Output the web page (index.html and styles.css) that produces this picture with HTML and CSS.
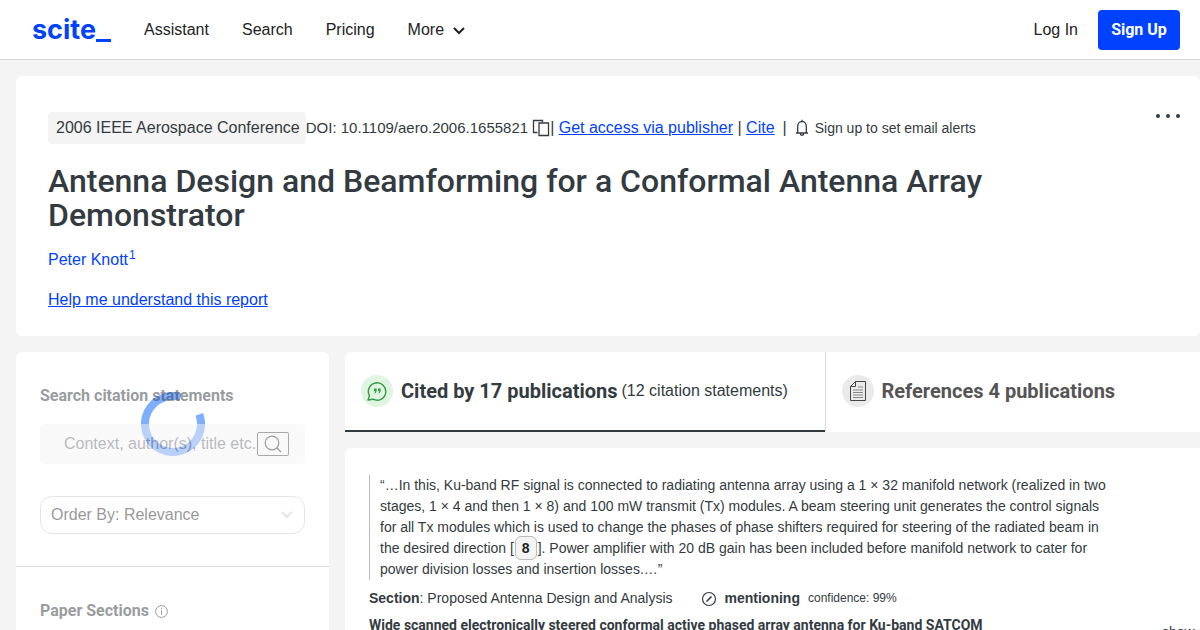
FILE: index.html
```html
<!DOCTYPE html>
<html lang="en">
<head>
  <meta charset="UTF-8">
  <meta name="viewport" content="width=device-width,initial-scale=1">
  <title>Antenna Design and Beamforming for a Conformal Antenna Array Demonstrator - scite</title>
  <link rel="stylesheet" href="styles.css">
</head>
<body>
  <header class="navbar">
    <a class="logo" href="#">scite<span class="logo-bar"></span></a>
    <nav class="nav-links">
      <a href="#">Assistant</a>
      <a href="#">Search</a>
      <a href="#">Pricing</a>
      <button class="more" type="button">More
        <svg width="14" height="14" viewBox="0 0 14 14"><path d="M2 5l5 5 5-5" fill="none" stroke="currentColor" stroke-width="2"/></svg>
      </button>
    </nav>
    <a class="login" href="#">Log In</a>
    <button class="signup" type="button">Sign Up</button>
  </header>

  <main>
    <section class="card paper">
      <div class="meta">
        <span class="journal">2006 IEEE Aerospace Conference</span>
        <span class="doi">DOI: 10.1109/aero.2006.1655821</span>
        <button class="copy" type="button" aria-label="Copy DOI">
          <svg width="18" height="18" viewBox="0 0 18 18" fill="none" stroke="currentColor"><path d="M5.500 13.500h-4v-12h9v2" stroke-width="1.300"/><path d="M7 4h9.500v12.500H7z" stroke-width="1.300"/></svg>
        </button>
        <span class="links">| <a href="#">Get access via publisher</a> | <a href="#">Cite</a></span>
        <span class="bar">|</span>
        <button class="alerts" type="button">
          <svg width="14" height="18" viewBox="0 0 14 18" fill="none" stroke="currentColor" stroke-width="1.300"><path d="M1 14h12M2.700 14V7.500C2.700 4.600 4.500 2.500 7 2.500s4.300 2.100 4.300 5V14M7 2.500V.8M5.300 14.500c0 2.300 3.400 2.300 3.400 0"/></svg>
          Sign up to set email alerts
        </button>
        <button class="dots" type="button" aria-label="More options">
          <svg width="24" height="4" viewBox="0 0 24 4" fill="currentColor"><circle cx="2" cy="2" r="2"/><circle cx="12" cy="2" r="2"/><circle cx="22" cy="2" r="2"/></svg>
        </button>
      </div>
      <h1>Antenna Design and Beamforming for a Conformal Antenna Array Demonstrator</h1>
      <div class="authors"><a href="#">Peter Knott<sup>1</sup></a></div>
      <a class="help" href="#">Help me understand this report</a>
    </section>

    <div class="columns">
      <aside class="card sidebar">
        <svg class="spinner" width="64" height="64" viewBox="0 0 64 64"><circle cx="32" cy="32" r="28" fill="none" stroke="#7fafff" stroke-width="8" stroke-dasharray="149 27" transform="rotate(-20 32 32)"/></svg>
        <form class="filters">
          <div class="filter-group">
            <label for="search">Search citation statements</label>
            <div class="search-box">
              <input id="search" type="text" placeholder="Context, author(s), title etc.">
              <button type="button" aria-label="Search">
                <svg width="18" height="18" viewBox="0 0 18 18" fill="none" stroke="currentColor" stroke-width="1.200"><circle cx="8" cy="8" r="6.800"/><path d="M13 13l4 4"/></svg>
              </button>
            </div>
            <div class="select-box">
              <select aria-label="Order by">
                <option>Order By: Relevance</option>
              </select>
              <svg width="12" height="8" viewBox="0 0 12 8"><path d="M1 1l5 5 5-5" fill="none" stroke="#ccc" stroke-width="2"/></svg>
            </div>
          </div>
          <div class="filter-group">
            <h2>Paper Sections
              <svg width="13" height="13" viewBox="0 0 13 13" fill="none" stroke="currentColor"><circle cx="6.500" cy="6.500" r="5.900"/><path d="M6.500 5.500v4M6.500 3.200v1.200"/></svg>
            </h2>
          </div>
        </form>
      </aside>

      <div class="report">
        <div class="tabs">
          <a class="tab active" href="#">
            <span class="tab-icon green">
              <svg width="20" height="20" viewBox="0 0 20 20" fill="none" stroke="currentColor" stroke-width="1.400"><path d="M1 19l1.500-4.200A8.700 8.700 0 1 1 6 18.200z" stroke-linejoin="round"/><g fill="currentColor" stroke="none"><path d="M7 7.500h2.600v2.300c0 1.500-.8 2.500-2.200 2.800v-.9c.6-.2.900-.7.900-1.400H7zM11 7.500h2.600v2.300c0 1.500-.8 2.500-2.200 2.800v-.9c.6-.2.900-.7.900-1.400H11z"/></g></svg>
            </span>
            <span class="tab-title">Cited by 17 publications</span>
            <span class="tab-note">(12 citation statements)</span>
          </a>
          <a class="tab" href="#">
            <span class="tab-icon gray">
              <svg width="16" height="20" viewBox="0 0 16 20" fill="none" stroke="currentColor"><path d="M5.500.5h10v19H.5v-14zM5.500.5v5h-5"/><path d="M8 6h5M3 9h10M3 11.500h10M3 14h10M3 16.500h10" stroke="#888"/></svg>
            </span>
            <span class="tab-title">References 4 publications</span>
          </a>
        </div>

        <article class="card statement">
          <blockquote>“…In this, Ku-band RF signal is connected to radiating antenna array using a 1 × 32 manifold network (realized in two<br>stages, 1 × 4 and then 1 × 8) and 100 mW transmit (Tx) modules. A beam steering unit generates the control signals<br>for all Tx modules which is used to change the phases of phase shifters required for steering of the radiated beam in<br>the desired direction [<a class="ref" href="#">8</a>]. Power amplifier with 20 dB gain has been included before manifold network to cater for<br>power division losses and insertion losses.…”</blockquote>
          <div class="section-row">
            <span><b>Section</b>: Proposed Antenna Design and Analysis</span>
            <span class="tally">
              <svg width="16" height="16" viewBox="0 0 16 16" fill="none" stroke="currentColor"><circle cx="8" cy="8" r="6.500" stroke-width="1.200"/><path d="M5.500 10.500l5-5" stroke-width="1.600"/></svg>
              <b>mentioning</b>
              <small>confidence: 99%</small>
            </span>
          </div>
          <div class="source-row">
            <h3>Wide scanned electronically steered conformal active phased array antenna for Ku-band SATCOM</h3>
            <button type="button">show abstract</button>
          </div>
        </article>
      </div>
    </div>
  </main>
</body>
</html>
```
FILE: styles.css
```css
:root {
  --blue: #0042ff;
  --text: #333b41;
  --bg: #f4f4f4;
}
* { box-sizing: border-box; }
body {
  margin: 0;
  overflow-x: hidden;
  background: var(--bg);
  color: var(--text);
  font: 16px/24px "Liberation Sans", Arial, sans-serif;
}
a { color: inherit; text-decoration: none; }
button {
  padding: 0;
  border: 0;
  background: none;
  color: inherit;
  font: inherit;
  cursor: pointer;
}
svg { display: block; flex: none; }
h1, h2, h3, label, .tab-title, .signup { font-family: Roboto, sans-serif; }

/* navbar */
.navbar {
  display: flex;
  align-items: center;
  height: 60px;
  padding: 0 20px 0 32px;
  background: #fff;
  border-bottom: 1px solid #d8d8d8;
  color: #222;
}
.logo {
  display: flex;
  color: var(--blue);
  font: 700 27px/32px Inter, sans-serif;
}
.logo-bar {
  align-self: flex-end;
  width: 15px;
  height: 3px;
  margin-bottom: 4px;
  background: var(--blue);
}
.nav-links { display: flex; gap: 33px; margin-left: 33px; }
.more { display: flex; align-items: center; gap: 8px; }
.login { margin-left: auto; }
.signup {
  margin-left: 20px;
  width: 82px;
  height: 40px;
  border-radius: 4px;
  background: var(--blue);
  color: #fff;
  font-weight: 700;
}

/* paper header */
main { padding: 16px 0 0 16px; }
.card { background: #fff; border-radius: 6px; }
.paper { padding: 36px 20px 24px 32px; }
.meta { display: flex; align-items: center; height: 32px; }
.journal {
  padding: 4px 6px 4px 8px;
  border-radius: 4px;
  background: var(--bg);
}
.doi { font-size: 15px; }
.copy { margin-left: 4px; }
.links a { color: var(--blue); text-decoration: underline; }
.bar { margin: 0 8px; }
.alerts { display: flex; align-items: center; gap: 6px; font-size: 14px; }
.dots { margin: 0 0 24px auto; }
h1 {
  max-width: 960px;
  margin: 20px 0 16px;
  font-size: 32px;
  font-weight: 500;
  line-height: 34px;
}
.authors { margin-bottom: 16px; color: var(--blue); }
sup { font-size: 12px; line-height: 0; margin-left: 1px; }
.help { display: block; color: var(--blue); text-decoration: underline; }

.columns { display: flex; align-items: flex-start; gap: 16px; margin-top: 16px; }

/* filters */
.sidebar { position: relative; flex: 0 0 313px; overflow: hidden; }
.spinner { position: absolute; top: 40px; left: 125px; }
.filters { position: relative; opacity: .5; }
.filter-group { padding: 32px 24px; }
.filter-group + .filter-group { border-top: 1px solid #bbb; }
.filter-group label { display: block; font-weight: 700; }
.filter-group h2 {
  display: flex;
  align-items: center;
  gap: 6px;
  margin: 0;
  font-size: 16px;
}
.search-box {
  display: flex;
  align-items: center;
  height: 40px;
  margin: 16px 0 32px;
  padding: 0 16px 0 24px;
  border-radius: 4px;
  background: var(--bg);
}
.search-box input {
  flex: 1;
  min-width: 0;
  padding: 0;
  border: 0;
  outline: 0;
  background: none;
  font: inherit;
}
.search-box input::placeholder { color: #757582; }
.search-box button {
  display: grid;
  place-items: center;
  width: 32px;
  height: 24px;
  border: 1px solid #555;
  border-radius: 2px;
}
.select-box { display: grid; align-items: center; }
.select-box > * { grid-area: 1 / 1; }
.select-box svg { justify-self: end; margin-right: 12px; }
select {
  appearance: none;
  width: 100%;
  height: 38px;
  padding: 0 10px;
  border: 1px solid #ccc;
  border-radius: 12px;
  background: none;
  color: #333;
  font: inherit;
}

/* report */
.report { flex: 0 0 960px; }
.tabs { display: flex; border-radius: 6px 6px 0 0; overflow: hidden; background: #fff; }
.tab {
  flex: 1;
  display: flex;
  align-items: center;
  height: 80px;
  padding: 0 16px;
  border-bottom: 2px solid transparent;
  color: #555;
}
.tab + .tab { border-left: 1px solid #ddd; }
.tab.active { border-bottom-color: var(--text); color: var(--text); }
.tab-icon {
  display: grid;
  place-items: center;
  width: 32px;
  height: 32px;
  margin-right: 8px;
  border-radius: 50%;
}
.green { background: #dff5e1; color: #349a45; }
.gray { background: #eaeaea; color: #444; }
.tab-title { font-size: 20px; font-weight: 700; }
.tab-note { margin-left: 4px; }

.statement { margin-top: 16px; padding: 27px 24px; font-size: 14px; line-height: 21px; }
blockquote {
  margin: 0;
  padding-left: 10px;
  border-left: 1px solid #bbb;
  white-space: nowrap;
}
.ref {
  margin: 0 1px;
  padding: 3px 6px;
  border: 1px solid #bbb;
  border-radius: 6px;
  background: var(--bg);
  color: #222;
  font-weight: 700;
}
.section-row { display: flex; gap: 28px; margin: 8px 0 6px; }
.tally { display: flex; align-items: center; gap: 8px; }
small { font-size: 12px; }
.source-row { display: flex; align-items: flex-start; }
h3 { flex: 0 0 793px; margin: 0; font-size: 14px; }
.source-row button { margin-top: 7px; }
```
